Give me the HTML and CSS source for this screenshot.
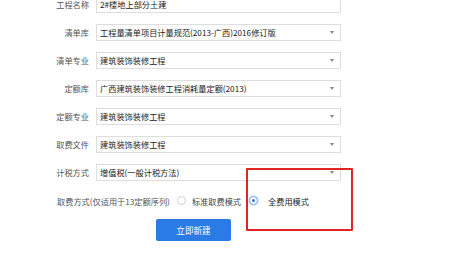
FILE: index.html
```html
<!DOCTYPE html>
<html lang="zh-CN">
<head>
<meta charset="utf-8">
<link rel="stylesheet" href="styles.css">
</head>
<body>
<div class="page">
  <div class="form">
    <div class="row">
      <div class="label">工程名称</div>
      <div class="field"><span class="val">2#楼地上部分土建</span></div>
    </div>
    <div class="row">
      <div class="label">清单库</div>
      <div class="field"><span class="val">工程量清单项目计量规范(2013-广西)2016修订版</span><span class="arrow"></span></div>
    </div>
    <div class="row">
      <div class="label">清单专业</div>
      <div class="field"><span class="val">建筑装饰装修工程</span><span class="arrow"></span></div>
    </div>
    <div class="row">
      <div class="label">定额库</div>
      <div class="field"><span class="val">广西建筑装饰装修工程消耗量定额(2013)</span><span class="arrow"></span></div>
    </div>
    <div class="row">
      <div class="label">定额专业</div>
      <div class="field"><span class="val">建筑装饰装修工程</span><span class="arrow"></span></div>
    </div>
    <div class="row">
      <div class="label">取费文件</div>
      <div class="field"><span class="val">建筑装饰装修工程</span><span class="arrow"></span></div>
    </div>
    <div class="row">
      <div class="label">计税方式</div>
      <div class="field"><span class="val">增值税(一般计税方法)</span><span class="arrow"></span></div>
    </div>
    <div class="radio-row">
      <span class="radio-label">取费方式(仅适用于13定额序列)</span>
      <span class="radio"></span>
      <span class="radio-text">标准取费模式</span>
      <span class="radio checked"></span>
      <span class="radio-text">全费用模式</span>
    </div>
    <div class="actions">
      <button class="btn">立即新建</button>
    </div>
  </div>
  <div class="highlight"></div>
</div>
</body>
</html>
```
FILE: styles.css
```css
html, body {
  margin: 0;
  padding: 0;
  background: #ffffff;
}
body {
  font-family: "Noto Sans CJK SC", "Noto Sans", sans-serif;
  font-size: 8.2px;
  color: #333;
  width: 474px;
  height: 275px;
  overflow: hidden;
}
.page {
  position: relative;
  width: 474px;
  height: 275px;
}
.form {
  margin-top: -4px;
  display: flex;
  flex-direction: column;
  gap: 11px;
}
.row {
  display: flex;
  align-items: center;
  height: 17px;
}
.label {
  width: 89px;
  text-align: right;
  color: #555;
  margin-right: 7px;
  line-height: 17px;
}
.field {
  width: 245px;
  height: 17px;
  box-sizing: border-box;
  border: 1px solid #dedede;
  background: #fff;
  display: flex;
  align-items: center;
  justify-content: space-between;
  padding: 0 6px 0 3px;
}
.val {
  color: #222;
  white-space: nowrap;
  line-height: 15px;
}
.arrow {
  width: 0;
  height: 0;
  border-left: 2.5px solid transparent;
  border-right: 2.5px solid transparent;
  border-top: 3px solid #888;
}
.radio-row {
  display: flex;
  align-items: center;
  height: 17px;
  padding-left: 57px;
  color: #555;
}
.radio-label {
  margin-right: 7px;
  white-space: nowrap;
}
.radio {
  width: 9px;
  height: 9px;
  box-sizing: border-box;
  border: 1px solid #cfcfcf;
  border-radius: 50%;
  background: #fff;
  margin-right: 6px;
  position: relative;
}
.radio.checked {
  border-color: #7aa7ec;
  box-shadow: 0 0 0 1px #dbe7fb;
  margin-left: 1px;
  margin-right: 10px;
}
.radio.checked::after {
  content: "";
  position: absolute;
  left: 2px;
  top: 2px;
  width: 3px;
  height: 3px;
  border-radius: 50%;
  background: #2f7be5;
}
.radio-text {
  white-space: nowrap;
  margin-right: 7px;
  color: #444;
}
.radio-text:last-child {
  color: #222;
}
.actions {
  padding-left: 156px;
  margin-top: -1px;
}
.btn {
  width: 75px;
  height: 22px;
  border: none;
  border-radius: 2px;
  background: #2b7be6;
  color: #fff;
  font-family: "Noto Sans CJK SC", "Noto Sans", sans-serif;
  font-size: 8.6px;
  padding: 0;
}
.highlight {
  position: absolute;
  left: 246px;
  top: 172px;
  width: 107px;
  height: 63px;
  box-sizing: border-box;
  border: 2px solid #e02424;
  border-radius: 1px;
}
```
